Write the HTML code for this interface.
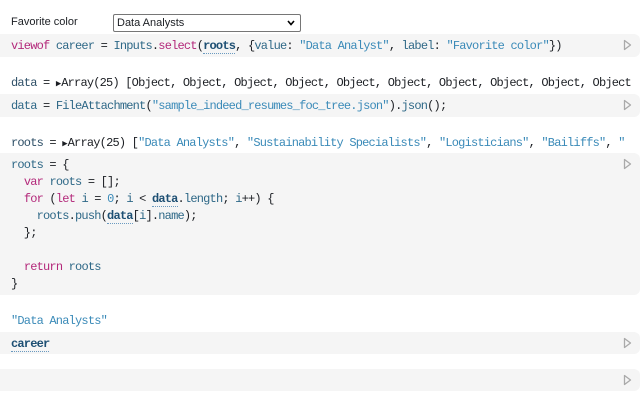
<!DOCTYPE html>
<html><head><style>
body{margin:0;width:640px;height:400px;background:#fff;overflow:hidden;position:relative;font-family:"Liberation Mono",monospace;font-size:12px;letter-spacing:-0.8px;color:#1b1e23}
.a{position:absolute;left:11px;white-space:pre;line-height:17px}
.cell{position:absolute;left:0;width:640px;background:#f5f5f5;border-radius:0 6px 6px 0}
.k{color:#b3287a}.v{color:#2e6887}.s{color:#3a8ab8}.f{color:#2e6887}
.b{font-weight:bold;color:#1d4f73;border-bottom:1px dotted #6a9ac0}
.o{color:#2e4f67}
.play{position:absolute;left:623px;width:9px;height:12px}
.tri{font-size:9px;letter-spacing:0}
</style></head><body>
<div style="position:absolute;left:11px;top:16px;font-family:'Liberation Sans',sans-serif;font-size:11px;letter-spacing:0">Favorite color</div>
<div style="position:absolute;left:113px;top:14px;width:183px;height:16px;border:1px solid #767676;border-radius:2px;font-family:'Liberation Sans',sans-serif;font-size:11px;letter-spacing:0;line-height:16px;padding-left:3px;box-sizing:content-box">Data Analysts<svg style="position:absolute;right:5px;top:5px" width="8" height="6" viewBox="0 0 8 6"><path d="M1 1L4 4.5L7 1" fill="none" stroke="#000" stroke-width="1.6"/></svg></div>

<div class="cell" style="top:34px;height:23px"></div>
<div class="a" style="top:38px"><span class="k">viewof</span> <span class="v">career</span> = <span class="v">Inputs</span>.<span class="k">select</span>(<span class="b">roots</span>, {<span class="f">value</span>: <span class="s">"Data Analyst"</span>, <span class="f">label</span>: <span class="s">"Favorite color"</span>})</div>

<div class="a" style="top:75px"><span class="o">data</span> = <span class="tri">▶</span>Array(25) [Object, Object, Object, Object, Object, Object, Object, Object, Object, Object</div>
<div class="cell" style="top:94px;height:23px"></div>
<div class="a" style="top:98px"><span class="v">data</span> = <span class="v">FileAttachment</span>(<span class="s">"sample_indeed_resumes_foc_tree.json"</span>).<span class="v">json</span>();</div>

<div class="a" style="top:135px"><span class="o">roots</span> = <span class="tri">▶</span>Array(25) [<span class="s">"Data Analysts"</span>, <span class="s">"Sustainability Specialists"</span>, <span class="s">"Logisticians"</span>, <span class="s">"Bailiffs"</span>, <span class="s">"</span></div>
<div class="cell" style="top:153px;height:142px"></div>
<div class="a" style="top:157px"><span class="v">roots</span> = {
  <span class="k">var</span> <span class="v">roots</span> = [];
  <span class="k">for</span> (<span class="k">let</span> <span class="v">i</span> = <span class="s">0</span>; <span class="v">i</span> &lt; <span class="b">data</span>.<span class="v">length</span>; <span class="v">i</span>++) {
    <span class="v">roots</span>.<span class="v">push</span>(<span class="b">data</span>[<span class="v">i</span>].<span class="v">name</span>);
  };

  <span class="k">return</span> <span class="v">roots</span>
}</div>

<div class="a" style="top:313px"><span class="s">"Data Analysts"</span></div>
<div class="cell" style="top:332px;height:22px"></div>
<div class="a" style="top:336px"><span class="b">career</span></div>
<div class="cell" style="top:369px;height:22px"></div>

<svg class="play" style="top:39px" viewBox="0 0 9 12"><path d="M1.5 1.5L7.5 6L1.5 10.5Z" fill="none" stroke="#aaa" stroke-width="1.3" stroke-linejoin="round"/></svg>
<svg class="play" style="top:99px" viewBox="0 0 9 12"><path d="M1.5 1.5L7.5 6L1.5 10.5Z" fill="none" stroke="#aaa" stroke-width="1.3" stroke-linejoin="round"/></svg>
<svg class="play" style="top:158px" viewBox="0 0 9 12"><path d="M1.5 1.5L7.5 6L1.5 10.5Z" fill="none" stroke="#aaa" stroke-width="1.3" stroke-linejoin="round"/></svg>
<svg class="play" style="top:337px" viewBox="0 0 9 12"><path d="M1.5 1.5L7.5 6L1.5 10.5Z" fill="none" stroke="#aaa" stroke-width="1.3" stroke-linejoin="round"/></svg>
<svg class="play" style="top:374px" viewBox="0 0 9 12"><path d="M1.5 1.5L7.5 6L1.5 10.5Z" fill="none" stroke="#aaa" stroke-width="1.3" stroke-linejoin="round"/></svg>
</body></html>
